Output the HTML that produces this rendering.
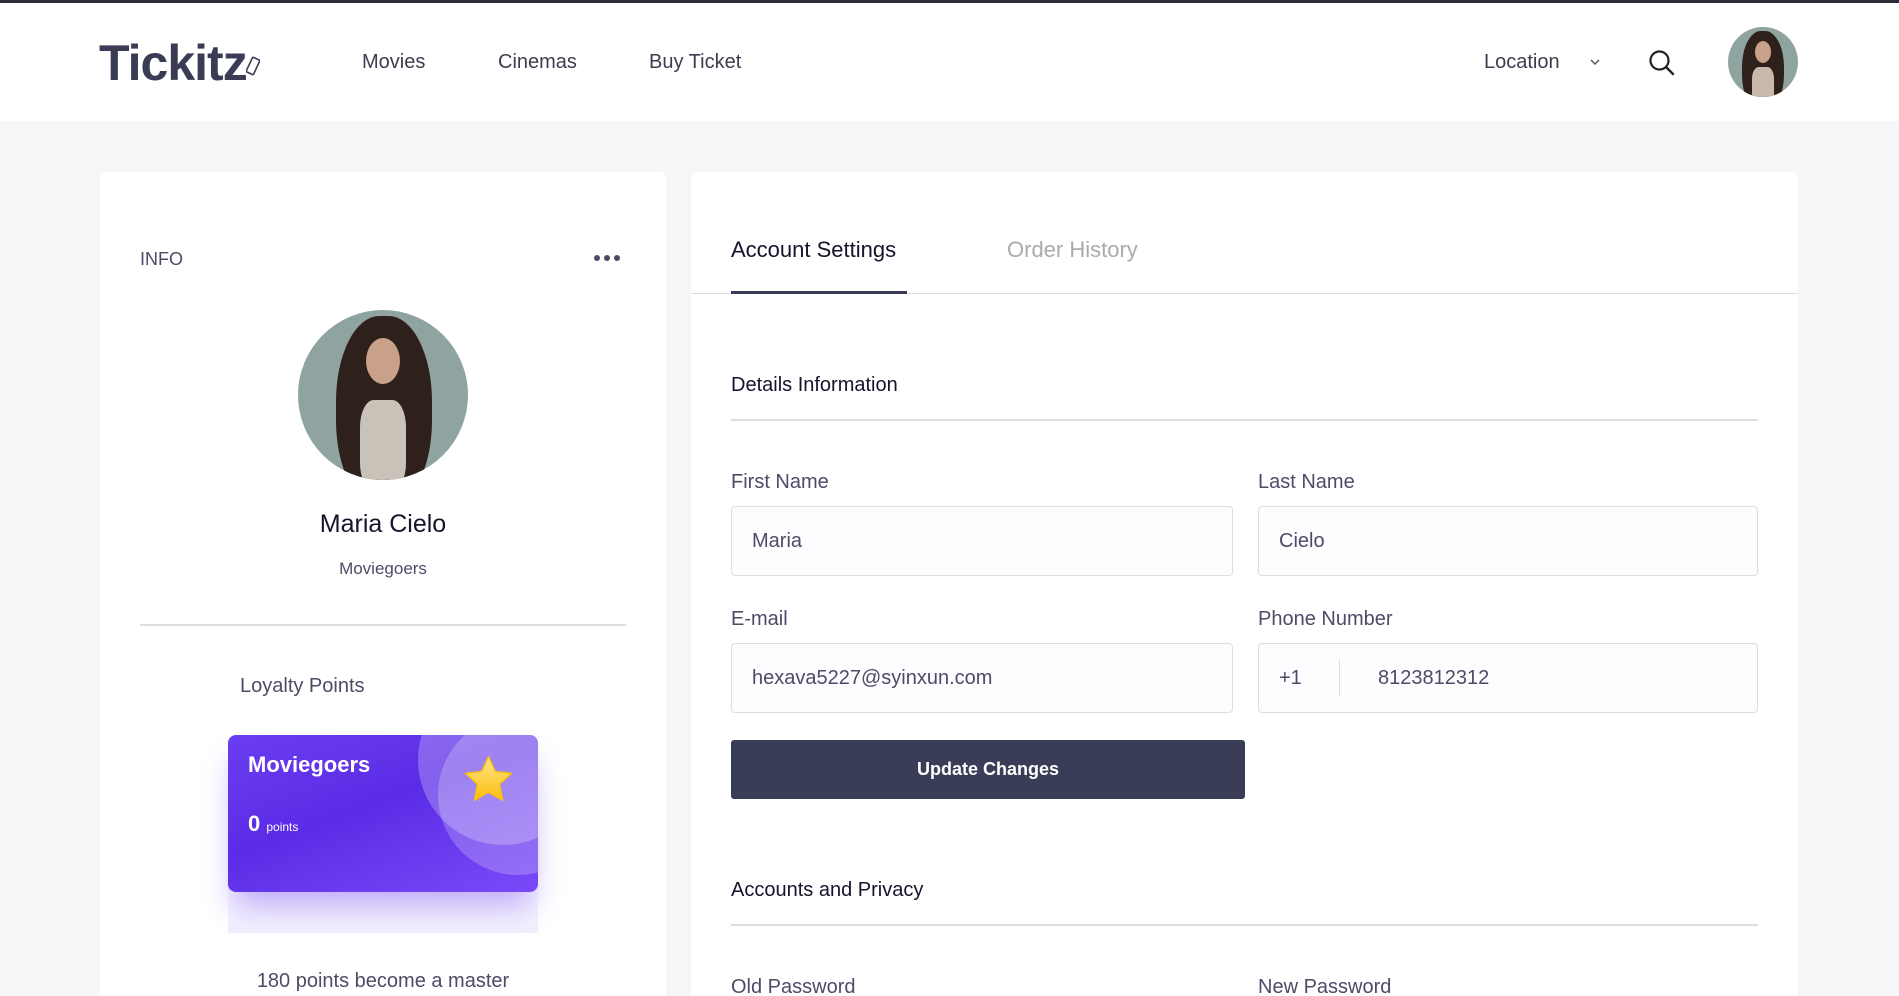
<!DOCTYPE html>
<html style="overflow:hidden;height:996px"><head><meta charset="utf-8"><style>
*{margin:0;padding:0;box-sizing:border-box}
body{width:1899px;height:996px;overflow:hidden;background:#f5f6f8;font-family:"Liberation Sans",sans-serif;color:#14142b;position:relative}
.a{position:absolute;white-space:nowrap}
.hdr{position:absolute;left:0;top:0;width:1899px;height:121px;background:#fff;border-top:3px solid #2b2d3c}
.card{position:absolute;background:#fff;border-radius:6px 6px 0 0}
.inp{position:absolute;height:70px;border:1px solid #dedede;border-radius:4px;background:#fcfdfe;font-size:20px;color:#4e4b66;padding-left:20px;line-height:68px}
.lbl{position:absolute;font-size:20px;color:#4e4b66}
</style></head><body>
<div class="hdr"></div>
<div class="a" style="left:99px;top:34px;font-size:50px;font-weight:bold;color:#3a3c55;letter-spacing:-1px">Tickitz</div>
<svg class="a" style="left:246px;top:56px" width="14" height="22" viewBox="0 0 14 22"><rect x="3" y="2" width="8" height="16" rx="1" transform="rotate(25 7 10)" fill="none" stroke="#3a3c55" stroke-width="1.6"/></svg>
<div class="a" style="left:362px;top:51px;font-size:20px;color:#3d3d4d">Movies</div>
<div class="a" style="left:498px;top:51px;font-size:20px;color:#3d3d4d">Cinemas</div>
<div class="a" style="left:649px;top:51px;font-size:20px;color:#3d3d4d">Buy Ticket</div>
<div class="a" style="left:1484px;top:51px;font-size:20px;color:#3d3d4d">Location</div>
<svg class="a" style="left:1589px;top:58px" width="12" height="8" viewBox="0 0 12 8"><path d="M2 2l4 4 4-4" fill="none" stroke="#555" stroke-width="1.5"/></svg>
<svg class="a" style="left:1648px;top:49px" width="28" height="28" viewBox="0 0 28 28"><circle cx="11.5" cy="11.5" r="9" fill="none" stroke="#222" stroke-width="2.2"/><path d="M18 18l7 7" stroke="#222" stroke-width="2.4" stroke-linecap="round"/></svg>
<div class="a" style="left:1728px;top:27px;width:70px;height:70px;border-radius:50%;overflow:hidden;background:#8fa4a0">
<div style="position:absolute;left:14px;top:4px;width:42px;height:80px;border-radius:45%;background:#2e201a"></div>
<div style="position:absolute;left:27px;top:14px;width:16px;height:22px;border-radius:50%;background:#c9a08a"></div>
<div style="position:absolute;left:24px;top:40px;width:22px;height:40px;border-radius:30%;background:#c9b8ac"></div></div>

<div class="card" style="left:100px;top:172px;width:566px;height:824px"></div>
<div class="a" style="left:140px;top:249px;font-size:18px;color:#4e4b66">INFO</div>
<div class="a" style="left:594px;top:255px;width:6px;height:6px;border-radius:50%;background:#4e4b66;box-shadow:10px 0 #4e4b66,20px 0 #4e4b66"></div>
<div class="a" style="left:298px;top:310px;width:170px;height:170px;border-radius:50%;overflow:hidden;background:#8fa4a0">
<div style="position:absolute;left:38px;top:6px;width:96px;height:190px;border-radius:45%;background:#2e201a"></div>
<div style="position:absolute;left:68px;top:28px;width:34px;height:46px;border-radius:50%;background:#c9a08a"></div>
<div style="position:absolute;left:62px;top:90px;width:46px;height:90px;border-radius:30%;background:#c9c2b8"></div></div>
<div class="a" style="left:0;width:766px;text-align:center;top:510px;font-size:25px;color:#14142b">Maria Cielo</div>
<div class="a" style="left:0;width:766px;text-align:center;top:559px;font-size:17px;color:#4e4b66">Moviegoers</div>
<div class="a" style="left:140px;top:624px;width:486px;height:2px;background:#dedede"></div>
<div class="a" style="left:240px;top:675px;font-size:20px;color:#4e4b66">Loyalty Points</div>
<div class="a" style="left:228px;top:727px;width:310px;height:206px;background:linear-gradient(#fff0,#fff0 60%,#f3efff);"></div>
<div class="a" style="left:228px;top:735px;width:310px;height:157px;border-radius:8px;background:linear-gradient(160deg,#6b3df0,#5a2ce6 45%,#7a4af8);overflow:hidden;box-shadow:0 20px 30px -6px rgba(120,80,240,.45)">
<div style="position:absolute;left:190px;top:-60px;width:170px;height:170px;border-radius:50%;background:rgba(255,255,255,.25)"></div>
<div style="position:absolute;left:210px;top:-20px;width:160px;height:160px;border-radius:50%;background:rgba(255,255,255,.22)"></div>
<svg style="position:absolute;left:233px;top:17px" width="55" height="55" viewBox="0 0 24 24"><defs><linearGradient id="g" x1="0" y1="0" x2="0" y2="1"><stop offset="0" stop-color="#fde68a"/><stop offset="1" stop-color="#fbbf0c"/></linearGradient></defs><path d="M12 2l3 6.5 7 .8-5.2 4.8 1.4 7L12 17.6 5.8 21.1l1.4-7L2 9.3l7-.8z" fill="url(#g)" stroke="#fbbf0c" stroke-width=".6" stroke-linejoin="round"/></svg>
<div style="position:absolute;left:20px;top:17px;font-size:22px;font-weight:bold;color:#fff">Moviegoers</div>
<div style="position:absolute;left:20px;top:76px;font-size:22px;font-weight:bold;color:#fff">0 <span style="font-size:12px;font-weight:normal">points</span></div>
</div>
<div class="a" style="left:0;width:766px;text-align:center;top:970px;font-size:20px;color:#4e4b66">180 points become a master</div>

<div class="card" style="left:691px;top:172px;width:1107px;height:824px"></div>
<div class="a" style="left:731px;top:237px;font-size:22px;color:#14142b">Account Settings</div>
<div class="a" style="left:1007px;top:237px;font-size:22px;color:#aaa">Order History</div>
<div class="a" style="left:691px;top:293px;width:1107px;height:1px;background:#dedede"></div>
<div class="a" style="left:731px;top:291px;width:176px;height:3px;background:#3a3c55"></div>
<div class="a" style="left:731px;top:374px;font-size:20px;color:#14142b">Details Information</div>
<div class="a" style="left:731px;top:419px;width:1027px;height:2px;background:#dedede"></div>
<div class="lbl" style="left:731px;top:471px">First Name</div>
<div class="lbl" style="left:1258px;top:471px">Last Name</div>
<div class="inp" style="left:731px;top:506px;width:502px">Maria</div>
<div class="inp" style="left:1258px;top:506px;width:500px">Cielo</div>
<div class="lbl" style="left:731px;top:608px">E-mail</div>
<div class="lbl" style="left:1258px;top:608px">Phone Number</div>
<div class="inp" style="left:731px;top:643px;width:502px">hexava5227@syinxun.com</div>
<div class="inp" style="left:1258px;top:643px;width:500px">+1<span style="position:absolute;left:80px;top:15px;width:1px;height:38px;background:#dedede"></span><span style="position:absolute;left:119px">8123812312</span></div>
<div class="a" style="left:731px;top:740px;width:514px;height:59px;background:#3a3d58;border-radius:3px;color:#fff;font-size:18px;font-weight:bold;text-align:center;line-height:59px">Update Changes</div>
<div class="a" style="left:731px;top:879px;font-size:20px;color:#14142b">Accounts and Privacy</div>
<div class="a" style="left:731px;top:924px;width:1027px;height:2px;background:#dedede"></div>
<div class="lbl" style="left:731px;top:976px">Old Password</div>
<div class="lbl" style="left:1258px;top:976px">New Password</div>
</body></html>
